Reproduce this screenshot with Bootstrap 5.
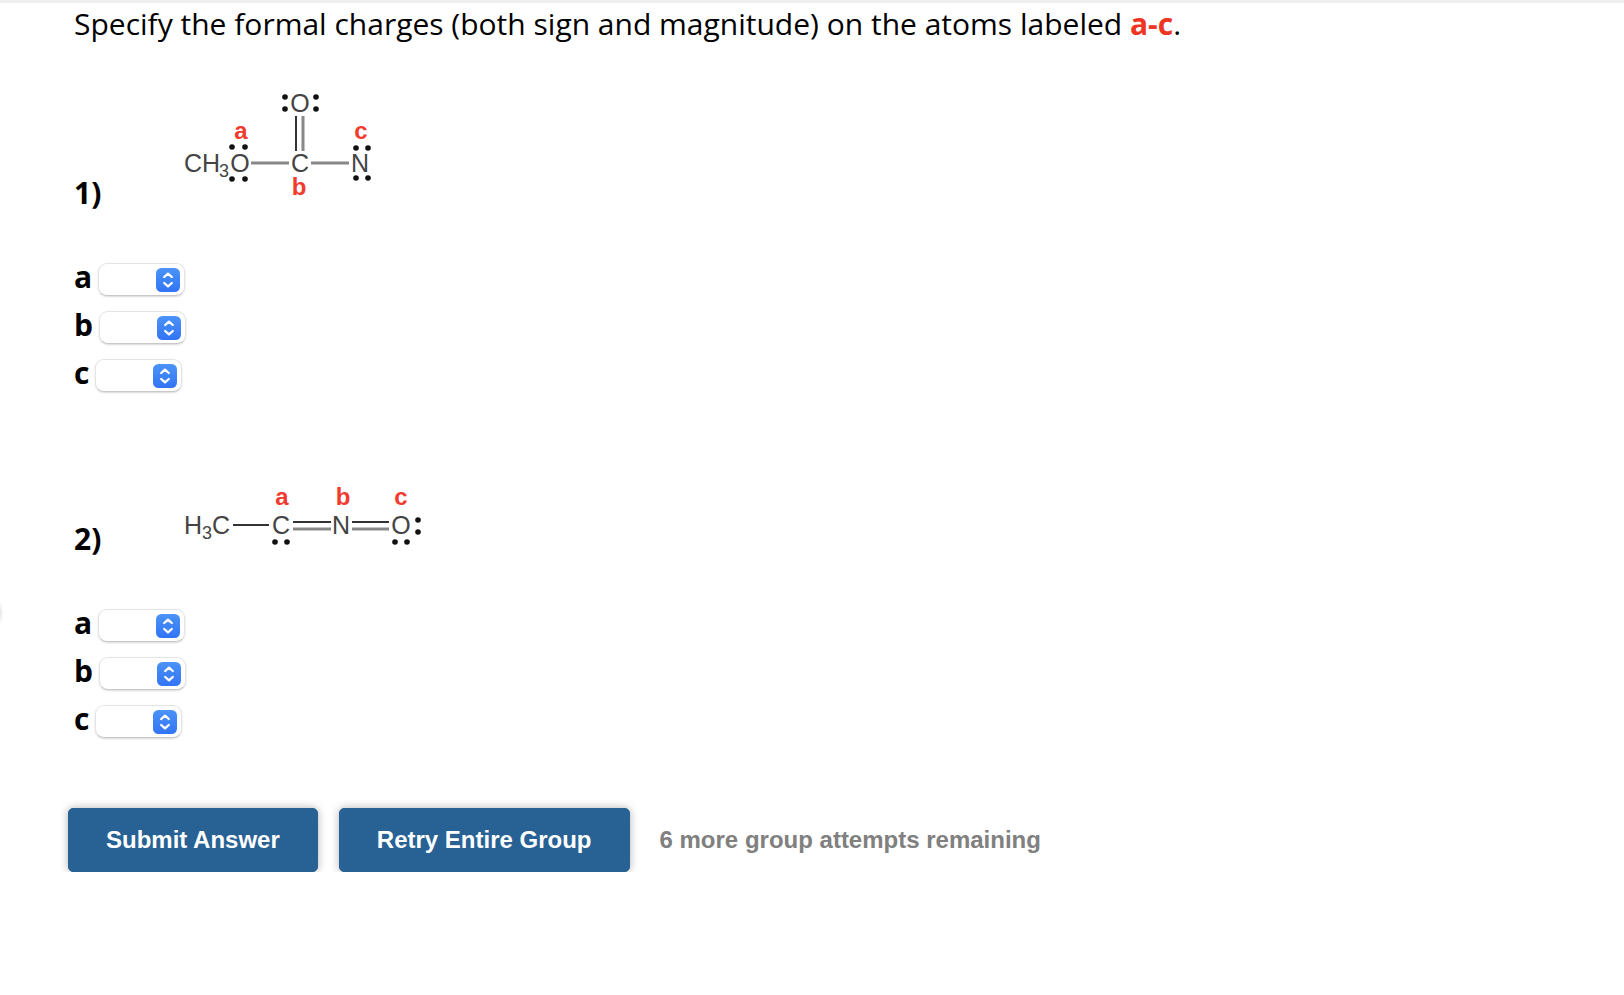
<!DOCTYPE html>
<html lang="en">
<head>
<meta charset="utf-8">
<meta name="viewport" content="width=device-width, initial-scale=1">
<title>Formal charges</title>
<link href="https://cdn.jsdelivr.net/npm/bootstrap@5.3.0/dist/css/bootstrap.min.css" rel="stylesheet">
<style>
  body { font-family: "Open Sans", "Noto Sans", sans-serif; font-size: 30px; line-height: 48px; color: #000; background: #fff; }
  .question { border-top: 3px solid #eee; padding: 0 68px; }
  .question-body { padding-left: 6px; }
  .prompt { line-height: 42px; }
  .accent { color: #ee3524; }
  .part { margin-top: 36px; }
  .part + .part { margin-top: 30px; }
  .part-head { gap: 80px; height: 136px; }
  .part-number { width: 30px; }
  .part-fields { margin-top: 36px; }
  .field-row { height: 48px; gap: 6px; }
  .charge-select {
    width: 87px; height: 33px; margin-top: 5px; padding: 0 32px 0 8px; font-size: 20px; line-height: 1; border-radius: 9px;
    border: 1px solid #e4e4e4; border-bottom-color: #c8c8c8; box-shadow: 0 1px 2px rgba(0, 0, 0, .15);
    background-position: right 4px center; background-size: 24px 24px;
    background-image: url("data:image/svg+xml,%3Csvg xmlns='http://www.w3.org/2000/svg' viewBox='0 0 24 24'%3E%3Cdefs%3E%3ClinearGradient id='g' x2='0' y2='1'%3E%3Cstop stop-color='%234b93f8'/%3E%3Cstop offset='1' stop-color='%233274f5'/%3E%3C/linearGradient%3E%3C/defs%3E%3Crect width='24' height='24' rx='5.5' fill='url(%23g)'/%3E%3Cpath d='M8.2 9l3.8-3.4L15.800 9M8.2 15l3.800 3.4 3.800-3.4' fill='none' stroke='%23fff' stroke-width='2.3' stroke-linecap='round' stroke-linejoin='round'/%3E%3C/svg%3E");
  }
  .molecule { font-family: "Liberation Sans", Arial, sans-serif; font-size: 25px; fill: #444; overflow: visible; }
  .molecule .sub { font-size: 18px; }
  .molecule .tag { font-size: 24px; font-weight: 700; fill: #f23b2f; }
  .molecule .mid { text-anchor: middle; }
  .molecule .dots { fill: #111; }
  .molecule .bond { stroke: #333; stroke-width: 2; }
  .molecule .soft { stroke: #888; stroke-width: 3; }
  .actions { margin-top: 65px; gap: 21px; font-family: "Liberation Sans", Arial, sans-serif; font-size: 24px; line-height: 28px; }
  .btn-answer {
    --bs-btn-bg: #286194; --bs-btn-color: #fff; --bs-btn-border-color: #286194;
    --bs-btn-hover-bg: #1f4f7a; --bs-btn-hover-color: #fff;
    --bs-btn-padding-x: 37px; --bs-btn-padding-y: 17px; --bs-btn-font-size: 24px; --bs-btn-line-height: 28px;
    --bs-btn-font-weight: 700; --bs-btn-border-radius: 5px; font-family: inherit; box-shadow: 0 0 8px rgba(0, 0, 0, .3);
  }
  .attempts { color: #808080; margin-left: 9px; }
  .edge-handle { left: -34px; top: 596px; width: 34px; height: 34px; border-radius: 50%; box-shadow: 0 0 4px rgba(0, 0, 0, .25); }
</style>
</head>
<body class="overflow-x-hidden">
<div class="edge-handle position-absolute"></div>
<main class="question">
  <div class="question-body">
    <p class="prompt mb-0">Specify the formal charges (both sign and magnitude) on the atoms labeled <b class="accent">a-c</b>.</p>

    <section class="part">
      <div class="part-head d-flex align-items-end">
        <b class="part-number">1)</b>
        <svg class="molecule" width="200" height="136" viewBox="184 81 200 136" role="img" aria-label="Structure 1">
          <text x="184" y="172">CH</text><text class="sub" x="219" y="177">3</text>
          <g class="mid">
            <text x="240" y="172">O</text><text x="300" y="172">C</text><text x="360" y="172">N</text><text x="300" y="112">O</text>
            <text class="tag" x="241" y="139">a</text><text class="tag" x="299" y="195">b</text><text class="tag" x="361" y="139">c</text>
          </g>
          <path class="bond" d="M296 116V151"/><path class="soft" d="M303 116V151M251 163H289M311 163H349"/>
          <g class="dots">
            <circle cx="232" cy="147" r="2.8"/><circle cx="245" cy="147" r="2.8"/><circle cx="232" cy="179" r="2.8"/><circle cx="245" cy="179" r="2.8"/>
            <circle cx="285" cy="97" r="2.8"/><circle cx="285" cy="109" r="2.8"/><circle cx="316" cy="97" r="2.8"/><circle cx="316" cy="109" r="2.8"/>
            <circle cx="356" cy="148" r="2.8"/><circle cx="368" cy="148" r="2.8"/><circle cx="356" cy="178" r="2.8"/><circle cx="368" cy="178" r="2.8"/>
          </g>
        </svg>
      </div>
      <div class="part-fields">
        <div class="field-row d-flex align-items-center"><label class="fw-bold" for="q1a">a</label><select class="form-select charge-select" id="q1a"><option></option><option>-1</option><option>0</option><option>+1</option></select></div>
        <div class="field-row d-flex align-items-center"><label class="fw-bold" for="q1b">b</label><select class="form-select charge-select" id="q1b"><option></option><option>-1</option><option>0</option><option>+1</option></select></div>
        <div class="field-row d-flex align-items-center"><label class="fw-bold" for="q1c">c</label><select class="form-select charge-select" id="q1c"><option></option><option>-1</option><option>0</option><option>+1</option></select></div>
      </div>
    </section>

    <section class="part">
      <div class="part-head d-flex align-items-end">
        <b class="part-number">2)</b>
        <svg class="molecule" width="250" height="136" viewBox="184 427 250 136" role="img" aria-label="Structure 2">
          <text x="184" y="534">H</text><text class="sub" x="202" y="539">3</text>
          <g class="mid">
            <text x="221" y="534">C</text><text x="281" y="534">C</text><text x="341" y="534">N</text><text x="401" y="534">O</text>
            <text class="tag" x="282" y="505">a</text><text class="tag" x="343" y="505">b</text><text class="tag" x="401" y="505">c</text>
          </g>
          <path class="bond" d="M233 525H269M293 522H331M352 522H389"/><path class="soft" d="M293 529H331M352 529H389"/>
          <g class="dots">
            <circle cx="275" cy="542" r="2.8"/><circle cx="287" cy="542" r="2.8"/><circle cx="395" cy="542" r="2.8"/><circle cx="407" cy="542" r="2.8"/>
            <circle cx="418" cy="520" r="2.8"/><circle cx="418" cy="532" r="2.8"/>
          </g>
        </svg>
      </div>
      <div class="part-fields">
        <div class="field-row d-flex align-items-center"><label class="fw-bold" for="q2a">a</label><select class="form-select charge-select" id="q2a"><option></option><option>-1</option><option>0</option><option>+1</option></select></div>
        <div class="field-row d-flex align-items-center"><label class="fw-bold" for="q2b">b</label><select class="form-select charge-select" id="q2b"><option></option><option>-1</option><option>0</option><option>+1</option></select></div>
        <div class="field-row d-flex align-items-center"><label class="fw-bold" for="q2c">c</label><select class="form-select charge-select" id="q2c"><option></option><option>-1</option><option>0</option><option>+1</option></select></div>
      </div>
    </section>
  </div>

  <div class="actions d-flex flex-wrap align-items-center">
    <button type="button" class="btn btn-answer">Submit Answer</button>
    <button type="button" class="btn btn-answer">Retry Entire Group</button>
    <span class="attempts fw-bold">6 more group attempts remaining</span>
  </div>
</main>
<script src="https://cdn.jsdelivr.net/npm/bootstrap@5.3.0/dist/js/bootstrap.bundle.min.js"></script>
</body>
</html>
